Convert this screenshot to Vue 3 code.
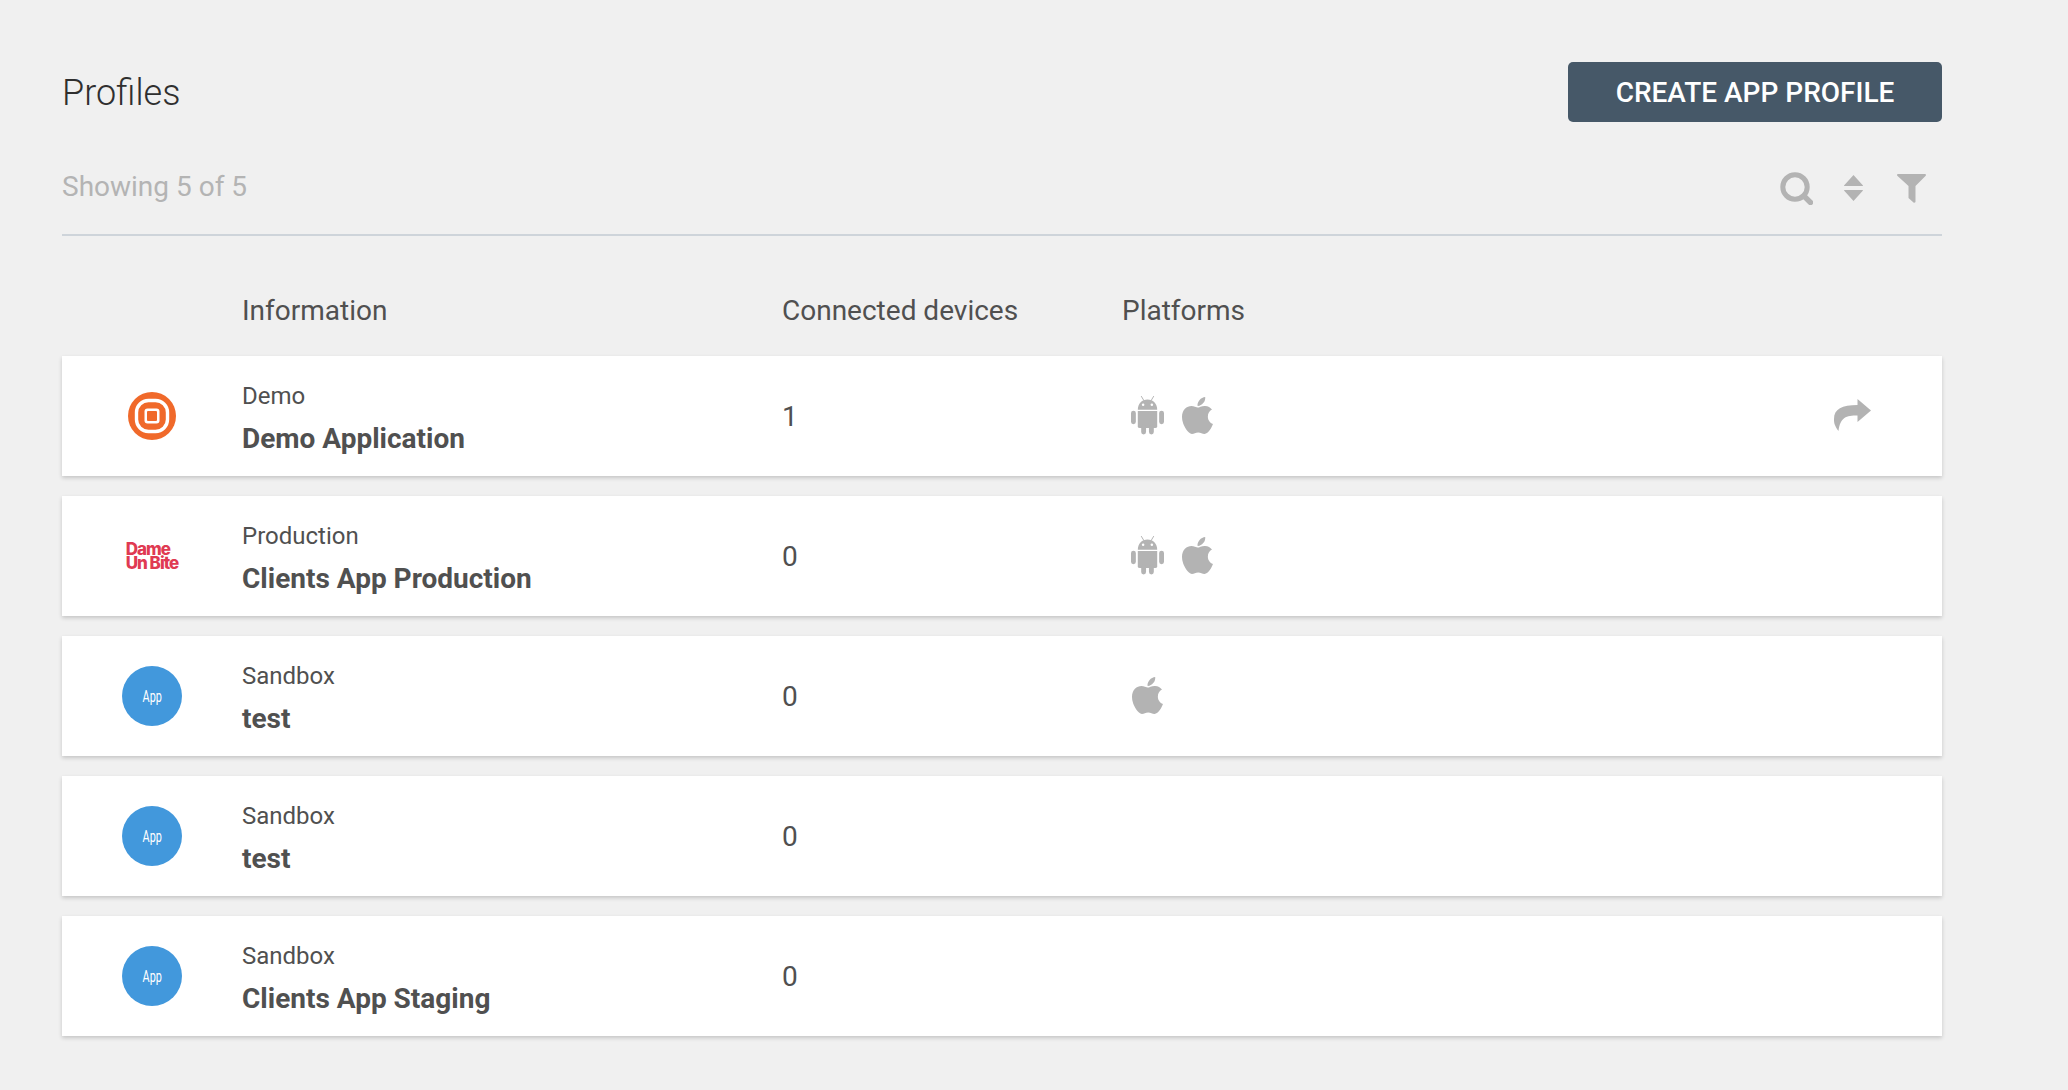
<script setup>
const rows = [
  { logo: 'target', env: 'Demo', name: 'Demo Application', count: 1, android: true, apple: true, share: true },
  { logo: 'brand', env: 'Production', name: 'Clients App Production', count: 0, android: true, apple: true },
  { logo: 'app', env: 'Sandbox', name: 'test', count: 0, apple: true },
  { logo: 'app', env: 'Sandbox', name: 'test', count: 0 },
  { logo: 'app', env: 'Sandbox', name: 'Clients App Staging', count: 0 }
]
</script>

<template>
  <main class="page">
    <header class="head">
      <h1 class="title">Profiles</h1>
      <button class="create">CREATE APP PROFILE</button>
    </header>
    <div class="toolbar">
      <span class="showing">Showing 5 of 5</span>
      <div class="tools">
        <svg viewBox="0 0 33 33" width="33" height="33"><circle cx="15" cy="15" r="12.2" fill="none" stroke="#b3b3b3" stroke-width="5"/><path d="M24 24l6.5 6.5" stroke="#b3b3b3" stroke-width="5.4" stroke-linecap="round"/></svg>
        <svg viewBox="0 0 19 26" width="19" height="26"><path d="M9.500 0L19 10.500a.6.6 0 0 1-.5.6H.5a.6.6 0 0 1-.5-.6zM.5 15h18a.6.6 0 0 1 .5.6L9.500 26 0 15.600a.6.6 0 0 1 .5-.6z" fill="#b3b3b3"/></svg>
        <svg class="t-filter" viewBox="0 0 29 29" width="29" height="29"><path d="M1 0h27a1 1 0 0 1 .7 1.700L18.500 12v15.500a1.200 1.200 0 0 1-2 .9l-5-4.400V12L.3 1.700A1 1 0 0 1 1 0z" fill="#b3b3b3"/></svg>
      </div>
    </div>
    <div class="columns">
      <span>Information</span>
      <span>Connected devices</span>
      <span>Platforms</span>
    </div>
    <section class="list">
      <article v-for="(r, i) in rows" :key="i" class="row">
        <div class="logo">
          <svg v-if="r.logo === 'target'" viewBox="0 0 48 48" width="48" height="48">
            <circle cx="24" cy="24" r="24" fill="#f0692a"/>
            <rect x="8.500" y="8.500" width="31" height="31" rx="12" fill="none" stroke="#fff" stroke-width="3.400"/>
            <rect x="16.500" y="16.500" width="15" height="15" rx="3" fill="#fff"/>
            <rect x="19" y="19" width="10" height="10" rx="1" fill="#f0692a"/>
          </svg>
          <div v-else-if="r.logo === 'brand'" class="brand">{{ 'Dame\nUn Bite' }}</div>
          <div v-else class="app"><span>App</span></div>
        </div>
        <div class="info">
          <div class="env">{{ r.env }}</div>
          <div class="name">{{ r.name }}</div>
        </div>
        <div class="count">{{ r.count }}</div>
        <div class="platforms">
          <svg v-if="r.android" viewBox="0 0 34 40" width="33" height="40" fill="#b3b3b3">
            <path d="M7 14.500C7 8 11.500 4 17 4s10 4 10 10.500z"/>
            <path d="M10.500 0.500l3 5M23.500 0.500l-3 5" stroke="#b3b3b3" stroke-width="1"/>
            <circle cx="12.500" cy="9.500" r="1.300" fill="#fff"/><circle cx="21.500" cy="9.500" r="1.300" fill="#fff"/>
            <path d="M7 16h20v15.500a2 2 0 0 1-2 2H9a2 2 0 0 1-2-2z"/>
            <rect x="0" y="15.500" width="5" height="14" rx="2.500"/><rect x="29" y="15.500" width="5" height="14" rx="2.500"/>
            <rect x="10.500" y="30" width="5" height="10" rx="2.500"/><rect x="18.500" y="30" width="5" height="10" rx="2.500"/>
          </svg>
          <svg v-if="r.apple" :class="{ solo: !r.android }" viewBox="4 32 377 448" width="31" height="37" fill="#b3b3b3">
            <path d="M318.700 268.700c-.2-36.700 16.400-64.400 50-84.800-18.800-26.900-47.200-41.700-84.700-44.600-35.500-2.800-74.300 20.700-88.500 20.700-15 0-49.400-19.700-76.400-19.700C63.300 141.200 4 184.800 4 273.500q0 39.300 14.400 81.200c12.800 36.700 59 126.700 107.200 125.200 25.200-.6 43-17.900 75.800-17.900 31.800 0 48.300 17.900 76.400 17.900 48.600-.7 90.400-82.500 102.600-119.300-65.200-30.700-61.700-90-61.700-91.900zm-56.600-164.200c27.300-32.400 24.800-61.900 24-72.500-24.100 1.400-52 16.400-67.900 34.900-17.500 19.800-27.800 44.300-25.600 71.900 26.100 2 49.900-11.400 69.500-34.300z"/>
          </svg>
        </div>
        <div class="action">
          <svg v-if="r.share" viewBox="0 0 37 32" width="37" height="32"><path d="M23.500 0L37 11.500 23.500 23v-6.500C12 16.500 6.500 18 4.500 32 0 26 0 23 0 20 0 10 8 6 23.500 6z" fill="#b3b3b3"/></svg>
        </div>
      </article>
    </section>
  </main>
</template>

<style scoped>
.page {
  width: 1880px;
  padding: 62px 126px 54px 62px;
  font-family: Roboto, "Liberation Sans", sans-serif;
  color: #505050;
}
.head {
  display: flex;
  justify-content: space-between;
  align-items: center;
  height: 60px;
}
.title {
  margin: 1px 0 0;
  font-size: 36px;
  font-weight: 300;
  color: #2f2f2f;
}
.create {
  width: 374px;
  height: 60px;
  border: 0;
  border-radius: 5px;
  background: #465868;
  color: #fff;
  font: 500 28px Roboto, "Liberation Sans", sans-serif;
}
.toolbar {
  display: flex;
  justify-content: space-between;
  align-items: center;
  height: 114px;
  padding-top: 18px;
  box-sizing: border-box;
  border-bottom: 2px solid #ced4da;
}
.showing {
  font-size: 28px;
  color: #b4b4b4;
  margin-top: -2px;
}
.tools {
  display: flex;
  align-items: center;
  gap: 31px;
  padding-right: 16px;
  margin-top: 2px;
}
.t-filter { margin-left: 3px; }
.columns {
  display: grid;
  grid-template-columns: 540px 340px 1fr;
  padding: 28px 0 0 180px;
  box-sizing: border-box;
  height: 120px;
  align-items: center;
  font-size: 28px;
}
.list {
  display: flex;
  flex-direction: column;
  gap: 20px;
}
.row {
  display: grid;
  grid-template-columns: 180px 540px 340px 1fr 120px;
  height: 120px;
  align-items: center;
  background: #fff;
  box-shadow: 0 2px 4px rgba(0, 0, 0, 0.18);
}
.logo {
  display: flex;
  justify-content: center;
}
.app {
  display: flex;
  align-items: center;
  justify-content: center;
  width: 60px;
  height: 60px;
  border-radius: 50%;
  background: #4298dc;
  color: #fff;
  font: 400 16px Roboto, sans-serif;
}
.app span {
  display: inline-block;
  transform: scaleX(0.68);
}
.brand {
  white-space: pre-line;
  color: #e03a52;
  font: 800 17px/14px Inter, Lato, sans-serif;
  letter-spacing: -1px;
}
.info { padding-top: 5px; }
.env {
  font-size: 24px;
  line-height: 28px;
}
.name {
  margin-top: 13px;
  font-size: 28px;
  line-height: 32px;
  font-weight: 700;
}
.count { font-size: 28px; }
.platforms {
  display: flex;
  align-items: center;
  gap: 18px;
  padding-left: 9px;
  margin-top: -2px;
}
.solo { margin-left: 1px; }
.action {
  display: flex;
  padding-left: 12px;
  margin-top: -2px;
}
</style>

<style>
html, body { background: #f0f0f0; }
</style>
